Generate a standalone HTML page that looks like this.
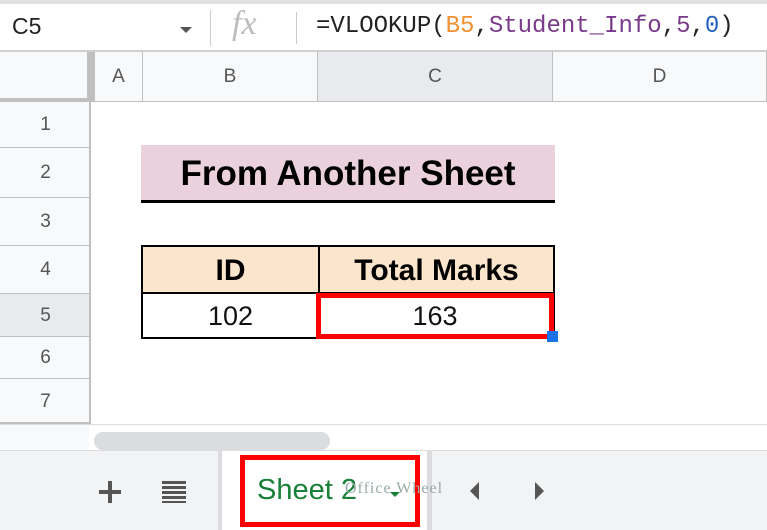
<!DOCTYPE html><html><head><style>
*{margin:0;padding:0;box-sizing:border-box}
body{width:767px;height:530px;overflow:hidden;background:#fff;font-family:"Liberation Sans",Arial,sans-serif;position:relative}
.a{position:absolute}
.rh{position:absolute;left:0;width:91px;background:#f8f9fa;border-bottom:1px solid #c0c0c0;color:#555;font-size:19px;text-align:center}
.ch{position:absolute;top:52px;height:50px;border-right:1px solid #c0c0c0;color:#555;font-size:19px;text-align:center;line-height:50px;background:#f8f9fa}
</style></head><body>
<div class="a" style="left:0;top:0;width:767px;height:4px;background:#e0e0e0"></div>
<div class="a" style="left:0;top:4px;width:767px;height:48px;background:#fff;border-bottom:2px solid #d0d0d0"></div>
<div class="a" style="left:12px;top:13px;font-size:23px;color:#222">C5</div>
<div class="a" style="left:180px;top:27px;width:0;height:0;border-left:6px solid transparent;border-right:6px solid transparent;border-top:6px solid #555"></div>
<div class="a" style="left:210px;top:10px;width:1px;height:36px;background:#ccc"></div>
<div class="a" style="left:232px;top:5px;font-family:'Liberation Serif',serif;font-style:italic;font-size:34px;color:#bbb">fx</div>
<div class="a" style="left:296px;top:12px;width:1px;height:32px;background:#ccc"></div>
<div class="a" style="left:316px;top:13px;font-family:'Liberation Mono',monospace;font-size:24px;color:#222;letter-spacing:0">=VLOOKUP(<span style="color:#f09030">B5</span>,<span style="color:#7a3a8a">Student_Info</span>,<span style="color:#7a3a8a">5</span>,<span style="color:#2060c0">0</span>)</div>
<!-- col headers -->
<div class="a" style="left:0;top:52px;width:91px;height:50px;background:#f8f9fa;border-bottom:4px solid #c0c0c0;border-right:4px solid #c0c0c0"></div>
<div class="ch" style="left:91px;width:52px;border-left:4px solid #c0c0c0;border-bottom:1px solid #c0c0c0">A</div>
<div class="ch" style="left:143px;width:175px;border-bottom:1px solid #c0c0c0">B</div>
<div class="ch" style="left:318px;width:235px;background:#e8eaed;border-bottom:1px solid #c0c0c0">C</div>
<div class="ch" style="left:553px;width:214px;border-bottom:1px solid #c0c0c0">D</div>
<!-- row headers -->
<div class="rh" style="top:102px;height:46px;line-height:46px">1</div>
<div class="rh" style="top:148px;height:50px;line-height:50px">2</div>
<div class="rh" style="top:198px;height:48px;line-height:48px">3</div>
<div class="rh" style="top:246px;height:48px;line-height:48px">4</div>
<div class="rh" style="top:294px;height:43px;line-height:43px;background:#e8eaed">5</div>
<div class="rh" style="top:337px;height:42px;line-height:42px">6</div>
<div class="rh" style="top:379px;height:45px;line-height:45px;border-bottom:2px solid #c0c0c0">7</div>
<div class="a" style="left:89px;top:102px;width:2px;height:348px;background:#c0c0c0"></div>
<!-- scrollbar -->
<div class="a" style="left:0;top:424px;width:767px;height:26px;background:#fff;border-top:1px solid #ddd"></div>
<div class="a" style="left:0;top:425px;width:89px;height:25px;background:#f8f9fa"></div>
<div class="a" style="left:94px;top:432px;width:236px;height:18px;border-radius:9px;background:#dadce0"></div>
<!-- title -->
<div class="a" style="left:141px;top:145px;width:414px;height:58px;background:#ead1dc;border-bottom:3px solid #000;text-align:center;font-weight:bold;font-size:35px;line-height:58px;color:#000">From Another Sheet</div>
<!-- table -->
<div class="a" style="left:141px;top:245px;width:414px;height:94px;border:2px solid #000"></div>
<div class="a" style="left:143px;top:247px;width:410px;height:47px;background:#fce5cd;border-bottom:2px solid #000"></div>
<div class="a" style="left:318px;top:247px;width:2px;height:47px;background:#000"></div>
<div class="a" style="left:143px;top:247px;width:175px;height:47px;line-height:47px;text-align:center;font-weight:bold;font-size:30px">ID</div>
<div class="a" style="left:320px;top:247px;width:233px;height:47px;line-height:47px;text-align:center;font-weight:bold;font-size:30px">Total Marks</div>
<div class="a" style="left:143px;top:296px;width:175px;height:41px;line-height:41px;text-align:center;font-size:27px;color:#111">102</div>
<div class="a" style="left:316px;top:293px;width:238px;height:46px;border:5px solid #ff0000;text-align:center;font-size:27px;line-height:36px;color:#111">163</div>
<div class="a" style="left:547px;top:331px;width:11px;height:11px;background:#1a73e8"></div>
<!-- tabs -->
<div class="a" style="left:0;top:450px;width:767px;height:80px;background:#f1f3f4;border-top:1px solid #ddd"></div>
<div class="a" style="left:218px;top:451px;width:4px;height:79px;background:#dadce0"></div>
<div class="a" style="left:427px;top:451px;width:5px;height:79px;background:#dadce0"></div>
<div class="a" style="left:222px;top:451px;width:205px;height:79px;background:#fff"></div>
<div class="a" style="left:99px;top:490px;width:22px;height:4px;background:#555"></div>
<div class="a" style="left:108px;top:481px;width:4px;height:22px;background:#555"></div>
<div class="a" style="left:162px;top:481px;width:24px;height:22px;background:repeating-linear-gradient(#555 0 3px,transparent 3px 5px)"></div>
<div class="a" style="left:240px;top:455px;width:180px;height:72px;border:5px solid #ff0000"></div>
<div class="a" style="left:257px;top:474px;font-size:29px;color:#188038">Sheet 2</div>
<div class="a" style="left:390px;top:492px;width:0;height:0;border-left:5px solid transparent;border-right:5px solid transparent;border-top:5px solid #188038"></div>
<div class="a" style="left:345px;top:480px;font-family:'Liberation Serif',serif;font-size:16px;color:#9aa;letter-spacing:1px">Office Wheel</div>
<div class="a" style="left:470px;top:482px;width:0;height:0;border-top:9px solid transparent;border-bottom:9px solid transparent;border-right:9px solid #555"></div>
<div class="a" style="left:535px;top:482px;width:0;height:0;border-top:9px solid transparent;border-bottom:9px solid transparent;border-left:9px solid #555"></div>
</body></html>
